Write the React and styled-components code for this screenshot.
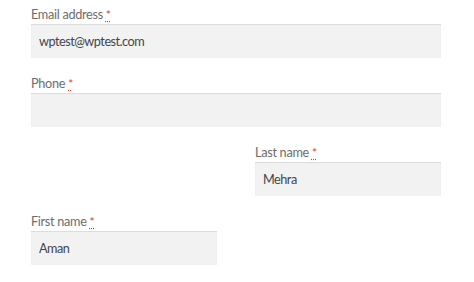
import React from 'react';
import styled, { createGlobalStyle } from 'styled-components';

const GlobalStyle = createGlobalStyle`
  html, body { margin: 0; padding: 0; background: #fff; }
  body { font-family: Lato, "Open Sans", sans-serif; }
`;

const Form = styled.div`
  width: 410px;
  padding: 4px 0 0 31px;
  display: flex;
  flex-direction: column;
`;

const Field = styled.div`
  width: ${p => (p.$half ? '186px' : '410px')};
  align-self: ${p => (p.$push ? 'flex-end' : 'flex-start')};
  margin-bottom: 15px;
  display: flex;
  flex-direction: column;
`;

const Label = styled.label`
  height: 20px;
  line-height: 20px;
  font-size: 12.7px;
  letter-spacing: -0.3px;
  color: #6d6d6d;
`;

const Required = styled.abbr`
  color: #e2401c;
  margin-left: 3px;
  text-decoration: underline dotted;
  text-underline-offset: 2px;
  font-size: 12px;
`;

const Input = styled.input`
  box-sizing: border-box;
  height: 34px;
  width: 100%;
  border: 0;
  margin: 0;
  padding: 0 8px;
  background: #f2f2f2;
  box-shadow: inset 0 1px 1px rgba(0, 0, 0, 0.1);
  font-family: inherit;
  font-size: 12.7px;
  letter-spacing: -0.5px;
  color: #43454b;
  outline: none;
`;

const fields = [
  { id: 'email', label: 'Email address', value: 'wptest@wptest.com' },
  { id: 'phone', label: 'Phone', value: '' },
  { id: 'last', label: 'Last name', value: 'Mehra', half: true, push: true },
  { id: 'first', label: 'First name', value: 'Aman', half: true },
];

export default function App() {
  return (
    <>
      <GlobalStyle />
      <Form>
        {fields.map(f => (
          <Field key={f.id} $half={f.half} $push={f.push}>
            <Label htmlFor={f.id}>
              {f.label}
              <Required title="required">*</Required>
            </Label>
            <Input id={f.id} defaultValue={f.value} />
          </Field>
        ))}
      </Form>
    </>
  );
}
